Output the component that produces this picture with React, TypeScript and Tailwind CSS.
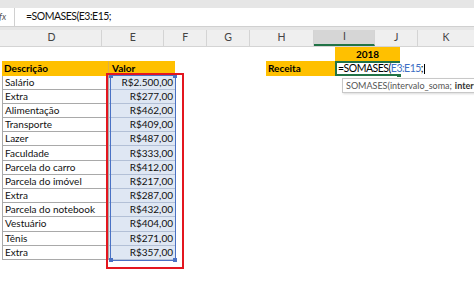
import React from "react";

const font = { fontFamily: "Lato, 'Liberation Sans', sans-serif" };

const rows: [string, string][] = [
  ["Salário", "R$2.500,00"],
  ["Extra", "R$277,00"],
  ["Alimentação", "R$462,00"],
  ["Transporte", "R$409,00"],
  ["Lazer", "R$487,00"],
  ["Faculdade", "R$333,00"],
  ["Parcela do carro", "R$412,00"],
  ["Parcela do imóvel", "R$217,00"],
  ["Extra", "R$287,00"],
  ["Parcela do notebook", "R$432,00"],
  ["Vestuário", "R$404,00"],
  ["Tênis", "R$271,00"],
  ["Extra", "R$357,00"],
];

function Handle({ className }: { className: string }) {
  return <div className={"absolute w-[4px] h-[4px] bg-[#4a72c4] " + className} />;
}

export default function App() {
  return (
    <div
      className="relative w-[474px] h-[304px] overflow-hidden bg-white text-black"
      style={font}
    >
      {/* top band */}
      <div className="h-[8px] bg-[#e6e6e6]" />
      {/* formula bar */}
      <div className="flex h-[19px] bg-white border-b border-[#d0d0d0]">
        <div className="w-[15px] border-r border-[#d0d0d0] flex items-center overflow-hidden">
          <span className="italic text-[9px] text-[#555] ml-[-1px]">fx</span>
        </div>
        <div className="flex items-center pl-[11px] text-[10.5px] tracking-[-0.5px] text-[#111]">=SOMASES(E3:E15;</div>
      </div>
      <div className="h-[3px] bg-[#e6e6e6]" />
      {/* column headers */}
      <div className="flex h-[17px] bg-[#efefef] border-b border-[#d4d4d4] text-[10.5px] text-[#444]">
        <div className="w-[2px]" />
        <div className="w-[107px] border-r border-[#d4d4d4] flex items-center justify-center">D</div>
        <div className="w-[66px] border-r border-[#d4d4d4] flex items-center justify-center">E</div>
        <div className="w-[46px] border-r border-[#d4d4d4] flex items-center justify-center">F</div>
        <div className="w-[45px] border-r border-[#d4d4d4] flex items-center justify-center">G</div>
        <div className="w-[69px] border-r border-[#d4d4d4] flex items-center justify-center">H</div>
        <div className="w-[65px] border-r border-[#d4d4d4] bg-[#d6d6d6] border-b-2 border-b-[#217346] flex items-center justify-center">I</div>
        <div className="w-[45px] border-r border-[#d4d4d4] flex items-center justify-center">J</div>
        <div className="w-[60px] flex items-center justify-center">K</div>
      </div>
      {/* row 1 */}
      <div className="flex h-[14px] text-[10px]">
        <div className="w-[335px]" />
        <div className="w-[65px] bg-[#ffc000] font-bold flex items-center justify-center">2018</div>
      </div>
      {/* row 2 */}
      <div className="flex h-[14.5px] text-[10px]">
        <div className="w-[2px]" />
        <div className="w-[107px] bg-[#ffc000] font-bold flex items-center pl-[2px] border-r border-[#e0b040]">Descrição</div>
        <div className="w-[66px] bg-[#ffc000] font-bold flex items-center pl-[3px]">Valor</div>
        <div className="w-[91px]" />
        <div className="w-[69px] bg-[#ffc000] font-bold flex items-center pl-[2px]">Receita</div>
        <div className="relative w-[65px] border-2 border-[#217346] bg-white flex items-center">
          <span className="absolute left-[1px] top-[0px] whitespace-nowrap text-[10.5px] tracking-[-0.5px] leading-[11px] bg-white z-10 pr-[1px]">
            =SOMASES(<span className="text-[#3d6fc4]">E3:E15</span>;<span className="inline-block w-px h-[10px] bg-black align-middle ml-[1px]" />
          </span>
          <div className="absolute right-[-3px] bottom-[-3px] w-[4px] h-[4px] bg-[#217346]" />
        </div>
      </div>
      {/* data rows */}
      {rows.map(([d, v], i) => (
        <div key={i} className="flex h-[14.2px] text-[10px]">
          <div className="w-[2px]" />
          <div className="w-[107px] border-l border-b border-r border-[#a9a9a9] flex items-center pl-[2px] text-[#111]">{d}</div>
          <div className="w-[66px] bg-[#dfe7f3] border-b border-[#b3c0d6] flex items-center justify-end pr-[2px] text-[#111]">{v}</div>
        </div>
      ))}

      {/* tooltip */}
      <div className="absolute left-[342px] top-[78px] h-[15px] border border-[#c8c8c8] bg-white shadow-[1px_1px_2px_rgba(0,0,0,0.15)] flex items-center px-[3px] whitespace-nowrap text-[9px] text-[#555]">
        SOMASES(intervalo_soma; <span className="font-bold text-[#333] ml-[3px]">intervalo_critérios1; critérios1; ...)</span>
      </div>

      {/* blue selection */}
      <div className="absolute left-[110px] top-[75px] w-[66px] h-[186px] border border-[#4a72c4]">
        <Handle className="left-[-2px] top-[-2px]" />
        <Handle className="right-[-2px] top-[-2px]" />
        <Handle className="left-[-2px] bottom-[-2px]" />
        <Handle className="right-[-2px] bottom-[-2px]" />
      </div>
      {/* red highlight */}
      <div className="absolute left-[106px] top-[73px] w-[78px] h-[196px] border-2 border-[#e3161f]" />
    </div>
  );
}
